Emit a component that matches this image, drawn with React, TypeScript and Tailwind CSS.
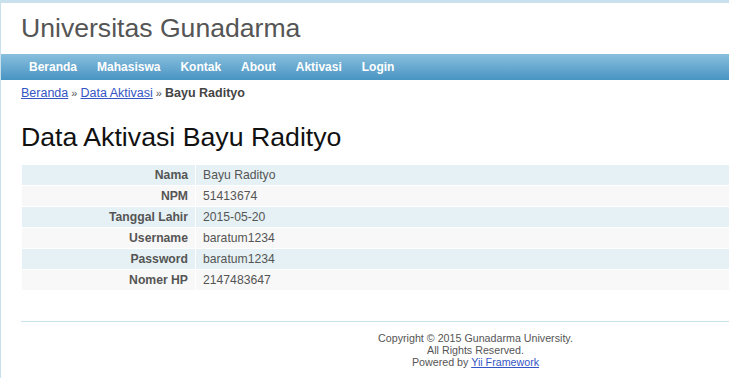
import React from 'react';

const menu = ['Beranda', 'Mahasiswa', 'Kontak', 'About', 'Aktivasi', 'Login'];

const rows = [
    { label: 'Nama', value: 'Bayu Radityo' },
    { label: 'NPM', value: '51413674' },
    { label: 'Tanggal Lahir', value: '2015-05-20' },
    { label: 'Username', value: 'baratum1234' },
    { label: 'Password', value: 'baratum1234' },
    { label: 'Nomer HP', value: '2147483647' },
];

const App: React.FC = () => {
    return (
        <div className="w-full min-h-[387px] overflow-hidden bg-white" style={{ fontFamily: '"Liberation Sans", Arial, sans-serif' }}>
            <div className="w-[950px] bg-white border-l border-[#c9e0ed] text-[#555]">
                {/* Header */}
                <div className="border-t-[3px] border-[#c9e0ed]">
                    <div className="px-[20px] pt-[10px] pb-[11px] text-[26.6px] leading-[30px] text-[#555]">
                        Universitas Gunadarma
                    </div>
                </div>

                {/* Main menu */}
                <div className="h-[26px] bg-gradient-to-b from-[#88bfdd] to-[#4894c3] px-[20px] flex items-center gap-[4px]">
                    {menu.map((item) => (
                        <a key={item} className="px-[8px] text-[12px] font-bold text-white leading-[26px]">
                            {item}
                        </a>
                    ))}
                </div>

                {/* Breadcrumbs */}
                <div className="px-[20px] pt-[5px] pb-[5px] text-[12.5px] leading-[16px]">
                    <a className="text-[#3455c4] underline">Beranda</a>
                    <span className="text-[#555] text-[11px]"> » </span>
                    <a className="text-[#3455c4] underline">Data Aktivasi</a>
                    <span className="text-[#555] text-[11px]"> » </span>
                    <span className="font-bold text-[#444]">Bayu Radityo</span>
                </div>

                {/* Content */}
                <div className="px-[20px] pt-[18px] pb-[20px]">
                    <h1 className="text-[26.7px] leading-[27px] text-[#111] mb-[13px]">Data Aktivasi Bayu Radityo</h1>
                    <table className="w-full border-collapse text-[12.2px]">
                        <tbody>
                            {rows.map((row, idx) => (
                                <tr key={row.label} className={idx % 2 === 0 ? 'bg-[#e5f1f4]' : 'bg-[#f8f8f8]'}>
                                    <th className="w-[174px] h-[21px] border border-white pr-[7px] text-right font-bold text-[#555] leading-[14px]">
                                        {row.label}
                                    </th>
                                    <td className="h-[21px] border border-white pl-[7px] text-left text-[#555] leading-[14px]">
                                        {row.value}
                                    </td>
                                </tr>
                            ))}
                        </tbody>
                    </table>
                </div>

                {/* Footer */}
                <div className="mx-[20px] mt-[10px] border-t border-[#c9e0ed] p-[10px] text-center text-[10.7px] leading-[12px] text-[#555]">
                    Copyright © 2015 Gunadarma University.<br />
                    All Rights Reserved.<br />
                    Powered by <a className="text-[#3455c4] underline">Yii Framework</a>
                </div>
            </div>
        </div>
    );
};

export default App;
